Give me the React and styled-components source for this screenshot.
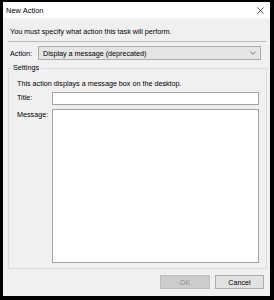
import React from "react";
import styled, { createGlobalStyle } from "styled-components";

const GlobalStyle = createGlobalStyle`
  html, body {
    margin: 0;
    padding: 0;
    background: #000;
  }
  body {
    font-family: "Liberation Sans", Arial, sans-serif;
    font-size: 7.2px;
    color: #000;
  }
`;

const Frame = styled.div`
  width: 274px;
  height: 300px;
  padding: 2px 4px 4px 3px;
  box-sizing: border-box;
  background: #000;
`;

const Window = styled.div`
  height: 100%;
  display: flex;
  flex-direction: column;
  background: #f0f0f0;
`;

const TitleBar = styled.div`
  height: 16px;
  flex-shrink: 0;
  display: flex;
  align-items: center;
  justify-content: space-between;
  padding: 0 3px 0 3px;
  background: #fff;
  font-size: 7.5px;
`;

const CloseButton = styled.div`
  width: 14px;
  height: 14px;
  display: flex;
  align-items: center;
  justify-content: center;
`;

const Body = styled.div`
  flex: 1;
  display: flex;
  flex-direction: column;
  padding: 0 3px 6px 5px;
`;

const Instruction = styled.div`
  padding: 9px 0 0 2px;
  line-height: 10px;
`;

const Divider = styled.div`
  margin: 4px 1px 0 0;
  height: 1px;
  background: #bcbcbc;
`;

const ActionRow = styled.div`
  margin-top: 4px;
  height: 14px;
  display: flex;
  align-items: center;
  padding-left: 2px;
`;

const ActionLabel = styled.span`
  width: 28px;
  flex-shrink: 0;
`;

const Combo = styled.div`
  flex: 1;
  margin-right: 6px;
  height: 14px;
  box-sizing: border-box;
  display: flex;
  align-items: center;
  justify-content: space-between;
  padding: 0 4px 0 4px;
  background: #e5e5e5;
  border: 1px solid #acacac;
`;

const Group = styled.fieldset`
  margin: 3px 0 0 0;
  padding: 6px 7px 5px 8px;
  border: 1px solid #dcdcdc;
  min-width: 0;
  flex-shrink: 0;
`;

const Legend = styled.legend`
  margin-left: -6px;
  padding: 0 2px;
  line-height: 10px;
  color: #000;
`;

const Description = styled.div`
  line-height: 10px;
`;

const FieldRow = styled.div`
  display: flex;
  align-items: flex-start;
  margin-top: ${(p) => p.$gap}px;
`;

const FieldLabel = styled.span`
  width: 35px;
  flex-shrink: 0;
  line-height: 12px;
`;

const TextBox = styled.div`
  flex: 1;
  height: ${(p) => p.$height}px;
  box-sizing: border-box;
  background: #fff;
  border: 1px solid #a3a3a3;
`;

const ButtonRow = styled.div`
  margin-top: 6px;
  display: flex;
  justify-content: flex-end;
  gap: 5px;
  padding-right: 3px;
`;

const Button = styled.div`
  width: ${(p) => p.$width}px;
  height: 14px;
  box-sizing: border-box;
  display: flex;
  align-items: center;
  justify-content: center;
  background: ${(p) => (p.$disabled ? "#cccccc" : "#e1e1e1")};
  border: 1px solid ${(p) => (p.$disabled ? "#bfbfbf" : "#adadad")};
  color: ${(p) => (p.$disabled ? "#8c8c8c" : "#000")};
`;

const App = () => (
  <>
    <GlobalStyle />
    <Frame>
      <Window>
        <TitleBar>
          <span>New Action</span>
          <CloseButton>
            <svg width="7" height="7" viewBox="0 0 7 7">
              <path d="M0.5 0.5L6.5 6.5M6.5 0.5L0.5 6.5" stroke="#222" strokeWidth="0.8" />
            </svg>
          </CloseButton>
        </TitleBar>
        <Body>
          <Instruction>You must specify what action this task will perform.</Instruction>
          <Divider />
          <ActionRow>
            <ActionLabel>Action:</ActionLabel>
            <Combo>
              <span>Display a message (deprecated)</span>
              <svg width="6" height="4" viewBox="0 0 6 4">
                <path d="M0.5 0.8L3 3.2L5.5 0.8" fill="none" stroke="#555" strokeWidth="0.8" />
              </svg>
            </Combo>
          </ActionRow>
          <Group>
            <Legend>Settings</Legend>
            <Description>This action displays a message box on the desktop.</Description>
            <FieldRow $gap={3}>
              <FieldLabel>Title:</FieldLabel>
              <TextBox $height={13} />
            </FieldRow>
            <FieldRow $gap={4}>
              <FieldLabel>Message:</FieldLabel>
              <TextBox $height={154} />
            </FieldRow>
          </Group>
          <ButtonRow>
            <Button $width={50} $disabled>OK</Button>
            <Button $width={49}>Cancel</Button>
          </ButtonRow>
        </Body>
      </Window>
    </Frame>
  </>
);

export default App;
